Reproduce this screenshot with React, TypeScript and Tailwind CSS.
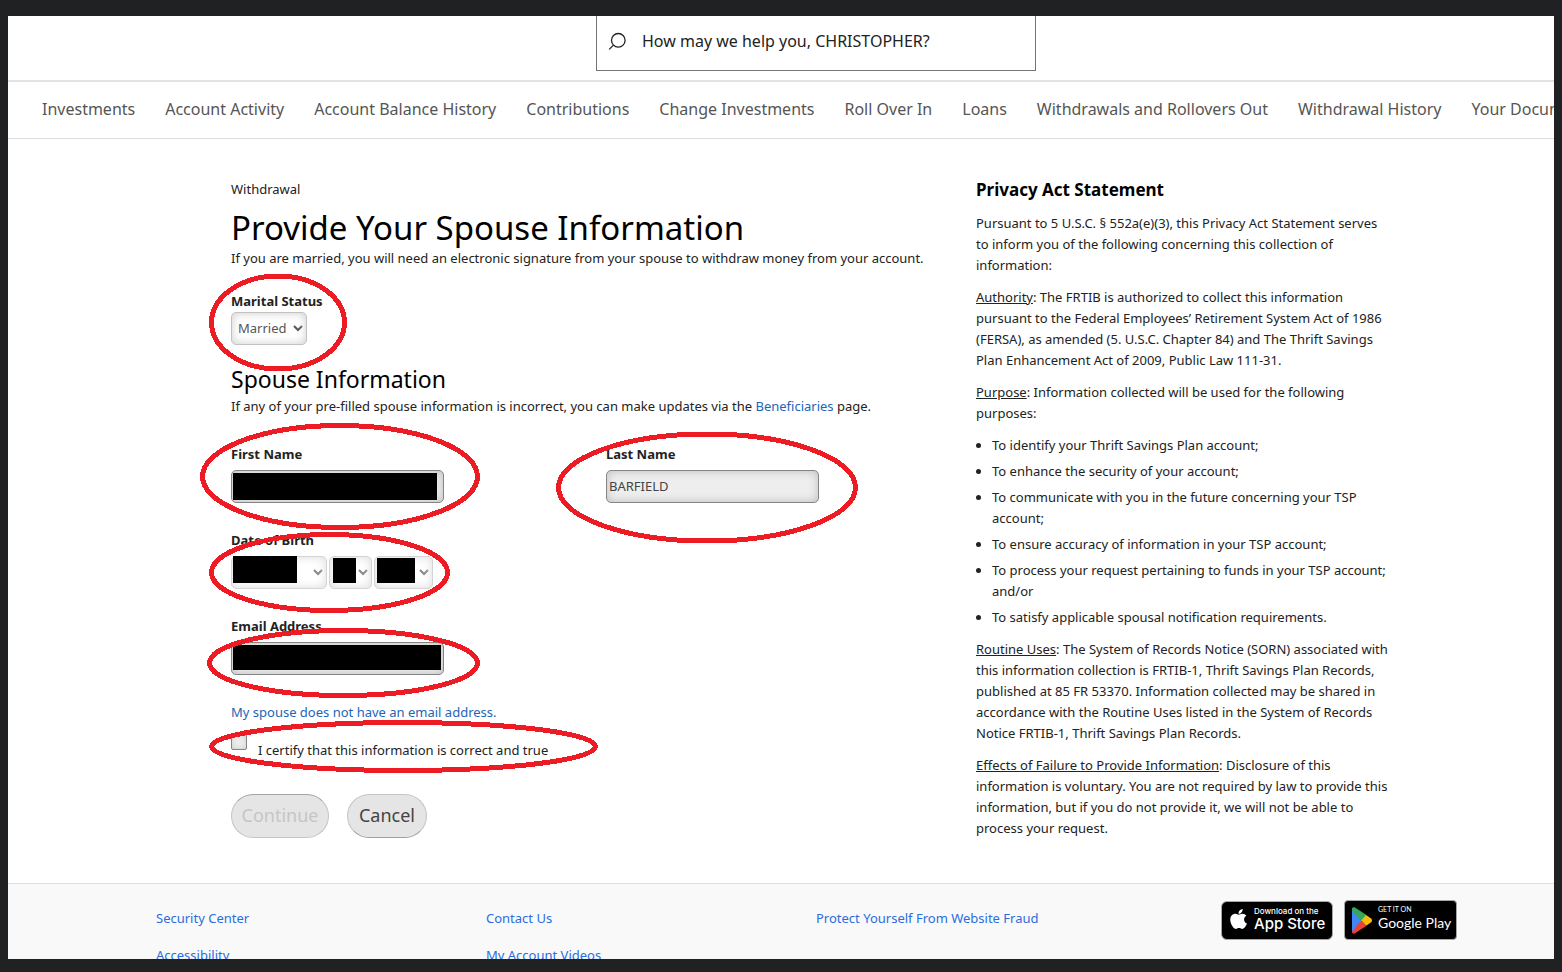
import { useState } from "react";
import type { ReactNode } from "react";

const NAV_ITEMS = [
  "Investments",
  "Account Activity",
  "Account Balance History",
  "Contributions",
  "Change Investments",
  "Roll Over In",
  "Loans",
  "Withdrawals and Rollovers Out",
  "Withdrawal History",
  "Your Documents",
];

const PURPOSES = [
  "To identify your Thrift Savings Plan account;",
  "To enhance the security of your account;",
  "To communicate with you in the future concerning your TSP account;",
  "To ensure accuracy of information in your TSP account;",
  "To process your request pertaining to funds in your TSP account; and/or",
  "To satisfy applicable spousal notification requirements.",
];

const FOOTER_COLUMNS = [
  ["Security Center", "Accessibility"],
  ["Contact Us", "My Account Videos"],
  ["Protect Yourself From Website Fraud"],
];

const inputClass =
  "block h-[33px] w-[213px] rounded-[5px] border border-[#858585] bg-[#eee] px-[2px] pb-[2px] text-[13px] text-[#444] shadow-[inset_0_0_10px_#bbb]";

const selectClass =
  "block h-[33px] rounded-[5px] border border-[#c2c2c2] bg-white text-[13px] text-[#555] shadow-[inset_0_0_10px_#ccc]";

function SearchIcon() {
  return (
    <svg
      className="size-[18px] shrink-0"
      viewBox="0 0 18 18"
      fill="none"
      stroke="#222"
      strokeWidth="1.3"
      aria-hidden="true"
    >
      <circle cx="10.300" cy="8.300" r="6.800" />
      <path d="M5.500 13.100 1.200 17.400" />
    </svg>
  );
}

function Marks() {
  return (
    <svg
      className="pointer-events-none absolute top-0 -left-[31px] z-10 overflow-visible"
      width="700"
      height="640"
      viewBox="200 179 700 640"
      fill="none"
      stroke="#ed1c24"
      strokeWidth="5"
      shapeRendering="crispEdges"
      aria-hidden="true"
    >
      <ellipse cx="278" cy="322.500" rx="66.500" ry="46.500" />
      <ellipse cx="340" cy="476.500" rx="137.500" ry="51" />
      <ellipse cx="707" cy="487.500" rx="148.500" ry="53.500" />
      <ellipse cx="329.500" cy="572.500" rx="118" ry="38" />
      <ellipse cx="343.500" cy="663" rx="134" ry="32.500" />
      <ellipse cx="403.500" cy="746.500" rx="192" ry="24" />
    </svg>
  );
}

function Field({
  id,
  label,
  children,
}: {
  id: string;
  label: string;
  children: ReactNode;
}) {
  return (
    <div>
      <label htmlFor={id} className="mb-[5px] block font-bold">
        {label}
      </label>
      {children}
    </div>
  );
}

function AppStoreBadge() {
  return (
    <a
      href="#app-store"
      className="flex h-[39px] w-28 items-center gap-[7px] rounded-md border border-[#a6a6a6] bg-black pl-2 font-[Inter,sans-serif] text-white"
    >
      <svg className="w-[17px] shrink-0" viewBox="0 0 384 480" fill="#fff" aria-hidden="true">
        <path d="M319 237c0-37 17-64 50-85-19-27-47-42-84-45-35-3-74 21-88 21-15 0-49-20-76-20C65 109 6 153 6 242c0 26 5 54 15 82 13 37 59 127 107 125 25-1 43-18 76-18 32 0 48 18 76 18 49-1 90-82 102-119-65-31-63-90-63-93zM262 73c27-32 25-62 24-73-24 1-52 17-68 35-18 20-28 45-26 73 26 2 50-12 70-35z" />
      </svg>
      <span className="flex flex-col pb-[2px] whitespace-nowrap">
        <span className="text-[8px] leading-[10px] font-medium">Download on the</span>
        <span className="text-[15px] leading-4 font-medium">App Store</span>
      </span>
    </a>
  );
}

function GooglePlayBadge() {
  return (
    <a
      href="#google-play"
      className="flex h-10 w-[113px] items-center gap-[6px] rounded-[4px] border border-[#a6a6a6] bg-black pl-[7px] font-[Lato,sans-serif] text-white"
    >
      <svg className="w-5 shrink-0" viewBox="0 0 20 27" aria-hidden="true">
        <path d="M0 2v23.500L10 13.500z" fill="#4285f4" />
        <path d="M0 2C0 .3 1.500-.3 3 .6L14.500 8 9.500 14 0 3z" fill="#34a853" />
        <path d="M14 8l4.500 3c2 1.300 2 3.500 0 4.800L14 18.800 9.200 13.500z" fill="#fbbc04" />
        <path d="M0 24.500l9.500-11 5 5.300L3 26.300c-1.500 1-3 .2-3-1.800z" fill="#ea4335" />
      </svg>
      <span className="flex flex-col pb-1 whitespace-nowrap">
        <span className="text-[7px] leading-[10px]">GET IT ON</span>
        <span className="text-[14px] leading-[18px]">Google Play</span>
      </span>
    </a>
  );
}

export default function App() {
  const [status, setStatus] = useState("married");
  const [certified, setCertified] = useState(false);

  return (
    <div className="flex h-screen bg-[#202123] px-2 pt-4 pb-[13px] font-['Noto_Sans',sans-serif] text-[13px] leading-[21px] text-[#222]">
      <div className="flex w-full flex-col overflow-hidden bg-white">
        <header className="flex shrink-0 justify-center border-b-2 border-[#e3e3e3] pb-[9px] pl-[70px]">
          <label className="flex h-[55px] w-[440px] items-center gap-4 border border-t-0 border-[#757575] pb-1 pl-[11px]">
            <SearchIcon />
            <input
              type="search"
              aria-label="Search"
              placeholder="How may we help you, CHRISTOPHER?"
              className="w-full text-[16px] outline-none placeholder:text-[#222]"
            />
          </label>
        </header>

        <nav className="flex h-[57px] shrink-0 items-center gap-[30px] overflow-hidden border-b border-[#ddd] pb-[2px] pl-[34px] text-[16px] whitespace-nowrap text-[#555]">
          {NAV_ITEMS.map((item) => (
            <a key={item} href="#nav">
              {item}
            </a>
          ))}
        </nav>

        <main className="mx-auto flex w-full max-w-[1360px] shrink-0 pt-10 pb-11 pl-[130px]">
          <form className="relative w-[745px] shrink-0" onSubmit={(e) => e.preventDefault()}>
            <Marks />
            <p>Withdrawal</p>
            <h1 className="mt-2 text-[33px] leading-10 text-black">
              Provide Your Spouse Information
            </h1>
            <p>
              If you are married, you will need an electronic signature from your spouse to
              withdraw money from your account.
            </p>

            <label htmlFor="marital" className="mt-[22px] block font-bold">
              Marital Status
            </label>
            <select
              id="marital"
              value={status}
              onChange={(e) => setStatus(e.target.value)}
              className={`${selectClass} w-[76px] pb-[2px] pl-[2px]`}
            >
              <option value="married">Married</option>
              <option value="single">Single</option>
            </select>

            <h2 className="mt-[19px] mb-[2px] text-[23px] leading-[30px] text-black">
              Spouse Information
            </h2>
            <p>
              If any of your pre-filled spouse information is incorrect, you can make updates
              via the{" "}
              <a href="#beneficiaries" className="text-[#2165b8]">
                Beneficiaries
              </a>{" "}
              page.
            </p>

            <div className="mt-[27px] grid grid-cols-[375px_1fr]">
              <Field id="first" label="First Name">
                <div className="relative">
                  <input id="first" type="text" disabled className={inputClass} />
                  <span className="absolute top-[3px] left-[2px] h-[27px] w-[204px] bg-black" />
                </div>
              </Field>
              <Field id="last" label="Last Name">
                <input id="last" type="text" disabled value="BARFIELD" className={inputClass} />
              </Field>
            </div>

            <div className="mt-[27px]">
              <Field id="month" label="Date of Birth">
                <div className="flex gap-[2px]">
                  <div className="relative">
                    <select id="month" disabled className={`${selectClass} w-24 opacity-70`} />
                    <span className="absolute top-0 left-[2px] h-[27px] w-16 bg-black" />
                  </div>
                  <div className="relative">
                    <select
                      aria-label="Day"
                      disabled
                      className={`${selectClass} w-[43px] opacity-70`}
                    />
                    <span className="absolute top-[2px] left-1 h-[25px] w-[23px] bg-black" />
                  </div>
                  <div className="relative">
                    <select
                      aria-label="Year"
                      disabled
                      className={`${selectClass} w-[59px] opacity-70`}
                    />
                    <span className="absolute top-[2px] left-[3px] h-[25px] w-[38px] bg-black" />
                  </div>
                </div>
              </Field>
            </div>

            <div className="mt-[27px]">
              <Field id="email" label="Email Address">
                <div className="relative">
                  <input id="email" type="email" disabled className={inputClass} />
                  <span className="absolute top-[3px] left-[2px] h-[25px] w-[208px] bg-black" />
                </div>
              </Field>
            </div>

            <a href="#no-email" className="mt-[27px] block w-fit text-[#2165b8]">
              My spouse does not have an email address.
            </a>

            <div className="mt-[11px] flex items-start gap-[11px]">
              <input
                id="certify"
                type="checkbox"
                checked={certified}
                onChange={(e) => setCertified(e.target.checked)}
                className="size-4 appearance-none rounded-[2px] border border-[#858585] bg-[#ececec] shadow-[inset_0_0_5px_#ccc] checked:bg-[#2165b8]"
              />
              <label htmlFor="certify" className="mt-[6px]">
                I certify that this information is correct and true
              </label>
            </div>

            <div className="mt-[33px] flex gap-[18px] text-[18px]">
              <button
                type="submit"
                disabled={!certified}
                className="h-11 w-[98px] rounded-full border border-[#c5c5c5] border-t-[#a5a5a5] bg-[#e5e5e5] pb-[2px] text-[#444] disabled:text-[#c5c5c5]"
              >
                Continue
              </button>
              <button
                type="button"
                className="h-11 w-20 rounded-full border border-[#c5c5c5] border-b-[#a0a0a0] bg-[#e5e5e5] pb-[2px] text-[#444]"
              >
                Cancel
              </button>
            </div>
          </form>

          <aside className="w-[415px] shrink-0 space-y-[11px]">
            <h3 className="mb-[13px] text-[17px] font-bold text-black">
              Privacy Act Statement
            </h3>
            <p>
              Pursuant to 5 U.S.C. § 552a(e)(3), this Privacy Act Statement serves to inform
              you of the following concerning this collection of information:
            </p>
            <p>
              <u>Authority</u>: The FRTIB is authorized to collect this information pursuant to
              the Federal Employees’ Retirement System Act of 1986 (FERSA), as amended (5.
              U.S.C. Chapter 84) and The Thrift Savings Plan Enhancement Act of 2009, Public
              Law 111-31.
            </p>
            <p>
              <u>Purpose</u>: Information collected will be used for the following purposes:
            </p>
            <ul className="list-disc space-y-[5px] pl-4">
              {PURPOSES.map((purpose) => (
                <li key={purpose}>{purpose}</li>
              ))}
            </ul>
            <p>
              <u>Routine Uses</u>: The System of Records Notice (SORN) associated with this
              information collection is FRTIB-1, Thrift Savings Plan Records, published at 85
              FR 53370. Information collected may be shared in accordance with the Routine Uses
              listed in the System of Records Notice FRTIB-1, Thrift Savings Plan Records.
            </p>
            <p>
              <u>Effects of Failure to Provide Information</u>: Disclosure of this information
              is voluntary. You are not required by law to provide this information, but if you
              do not provide it, we will not be able to process your request.
            </p>
          </aside>
        </main>

        <footer className="shrink-0 grow border-t border-[#ddd] bg-[#f9f9f9]">
          <div className="mx-auto flex w-full max-w-[1360px] items-start pt-4 pr-1 pl-[55px]">
            {FOOTER_COLUMNS.map((links) => (
              <ul key={links[0]} className="w-[330px] space-y-4 pt-2">
                {links.map((link) => (
                  <li key={link}>
                    <a href="#footer" className="text-[#2b6de0]">
                      {link}
                    </a>
                  </li>
                ))}
              </ul>
            ))}
            <div className="ml-auto flex items-center gap-[11px]">
              <AppStoreBadge />
              <GooglePlayBadge />
            </div>
          </div>
        </footer>
      </div>
    </div>
  );
}
